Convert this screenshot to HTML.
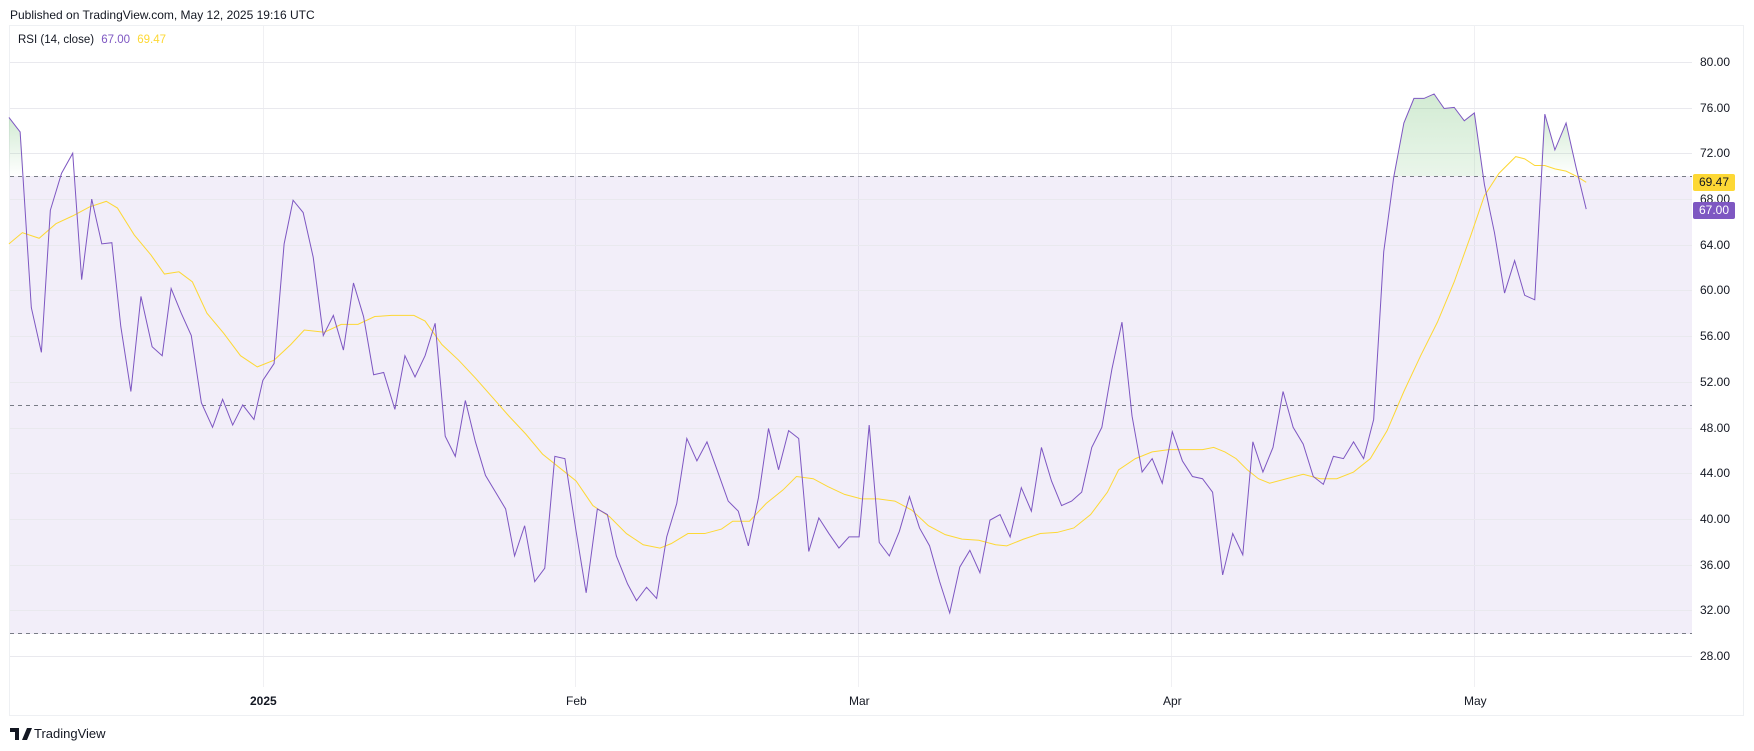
<!DOCTYPE html>
<html><head><meta charset="utf-8"><style>
body{margin:0;width:1754px;height:751px;background:#fff;position:relative;overflow:hidden;font-family:"Liberation Sans",sans-serif;color:#131722}
.t{position:absolute;font-size:12px;white-space:nowrap}
.ax{position:absolute;left:1700px;font-size:12px;color:#131722}
.bd{position:absolute;left:1693px;width:42px;height:17px;font-size:12px;line-height:17px;text-align:center;border-radius:2px}
svg{position:absolute;left:0;top:0}
</style></head><body>
<div class="t" style="left:10px;top:8px;font-size:12px">Published on TradingView.com, May 12, 2025 19:16 UTC</div>
<div style="position:absolute;left:9px;top:25px;width:1733px;height:689px;border:1px solid #eef0f3"></div>
<svg width="1754" height="751">
<g stroke="#f0f0f3" stroke-width="1">
<line x1="263.5" y1="26" x2="263.5" y2="687"/><line x1="575.5" y1="26" x2="575.5" y2="687"/><line x1="858.5" y1="26" x2="858.5" y2="687"/><line x1="1171.5" y1="26" x2="1171.5" y2="687"/><line x1="1474.5" y1="26" x2="1474.5" y2="687"/>
</g>
<rect x="10" y="176" width="1682" height="458" fill="#7e57c2" fill-opacity="0.1"/>
<g stroke="#e9e9ee" stroke-width="1">
<line x1="10" y1="62.5" x2="1692" y2="62.5"/><line x1="10" y1="108.5" x2="1692" y2="108.5"/><line x1="10" y1="153.5" x2="1692" y2="153.5"/><line x1="10" y1="199.5" x2="1692" y2="199.5"/><line x1="10" y1="245.5" x2="1692" y2="245.5"/><line x1="10" y1="290.5" x2="1692" y2="290.5"/><line x1="10" y1="336.5" x2="1692" y2="336.5"/><line x1="10" y1="382.5" x2="1692" y2="382.5"/><line x1="10" y1="428.5" x2="1692" y2="428.5"/><line x1="10" y1="473.5" x2="1692" y2="473.5"/><line x1="10" y1="519.5" x2="1692" y2="519.5"/><line x1="10" y1="565.5" x2="1692" y2="565.5"/><line x1="10" y1="610.5" x2="1692" y2="610.5"/><line x1="10" y1="656.5" x2="1692" y2="656.5"/>
</g>
<g stroke="#787b86" stroke-width="1" stroke-dasharray="4,4">
<line x1="10" y1="176.5" x2="1692" y2="176.5"/><line x1="10" y1="405.5" x2="1692" y2="405.5"/><line x1="10" y1="633.5" x2="1692" y2="633.5"/>
</g>
</svg>
<svg width="1754" height="751" viewBox="0 0 1568 671.4" preserveAspectRatio="none">
<defs>
<linearGradient id="g" x1="0" y1="0" x2="0" y2="1"><stop offset="0" stop-color="#4caf50" stop-opacity="0.25"/><stop offset="1" stop-color="#4caf50" stop-opacity="0"/></linearGradient>
<clipPath id="c"><rect x="0" y="0" width="1568" height="157.5"/></clipPath>
</defs>
<g clip-path="url(#c)">
<polygon fill="url(#g)" points="8,157.5 8,105 18,118 22,157.5"/>
<polygon fill="url(#g)" points="1228,157.5 1237,225 1246,158 1255,110 1264,88 1273,88 1282,84 1291,97 1300,96 1309,108 1318,101 1327,165 1330,157.5"/>
<polygon fill="url(#g)" points="1376,157.5 1381,102 1390,134 1400,110 1409,150 1412,157.5"/>
</g>
<polyline fill="none" stroke="#fdd835" stroke-width="0.9" points="8,218 20,208 35,213 50,200 65,193 80,185 95,180 105,186 120,210 135,228 147,245 160,243 172,252 185,280 200,298 215,318 230,328 245,322 260,308 272,295 290,297 305,290 320,290 335,283 350,282 370,282 380,287 395,308 410,322 425,338 440,355 455,372 470,388 485,406 500,418 515,430 530,452 545,462 560,477 575,487 590,490 600,486 615,477 630,477 645,473 655,466 670,466 685,450 700,438 712,426 727,428 740,435 755,442 770,446 785,446 800,448 815,456 830,470 845,478 860,482 875,483 890,487 900,488 915,482 930,477 945,476 960,472 975,460 990,440 1000,420 1015,410 1030,404 1045,402 1060,402 1075,402 1085,400 1095,404 1105,410 1115,420 1125,428 1135,432 1150,428 1165,424 1180,428 1195,428 1210,422 1225,410 1240,385 1255,350 1270,318 1285,288 1300,252 1315,210 1327,175 1340,155 1355,140 1363,142 1372,148 1381,148 1390,151 1400,153 1410,158 1418,163"/>
<polyline fill="none" stroke="#7e57c2" stroke-width="0.9" points="8,105 18,118 28,275 37,315 45,188 55,155 65,137 73,250 82,178 91,218 100,217 108,292 117,350 126,265 136,310 145,318 153,258 162,280 171,300 180,360 190,382 199,357 208,380 217,362 227,375 235,340 245,325 254,218 262,179 271,190 280,230 289,300 298,282 307,313 316,253 325,283 334,335 343,333 353,366 362,318 371,337 380,318 389,289 398,390 407,408 416,358 425,395 434,425 443,440 452,455 460,497 469,470 478,520 487,508 496,408 505,410 515,475 524,530 534,455 543,460 551,497 561,522 569,537 578,525 587,535 596,480 605,450 614,392 623,412 632,395 641,420 651,448 660,457 669,488 678,445 687,383 696,420 705,385 714,392 723,493 732,463 741,477 750,490 759,480 768,480 777,380 786,485 795,497 804,475 813,444 822,472 831,488 840,520 849,548 858,507 867,492 876,512 885,465 894,460 903,480 913,436 922,457 931,400 940,430 949,452 958,448 967,440 976,400 985,382 994,330 1003,288 1012,372 1021,422 1030,410 1039,432 1048,386 1057,412 1066,426 1075,428 1084,440 1093,514 1102,477 1111,496 1120,395 1129,422 1138,400 1147,350 1156,382 1165,397 1174,426 1183,433 1192,408 1201,410 1210,395 1219,410 1228,375 1237,225 1246,158 1255,110 1264,88 1273,88 1282,84 1291,97 1300,96 1309,108 1318,101 1327,165 1336,208 1345,262 1354,233 1363,264 1372,268 1381,102 1390,134 1400,110 1409,150 1418,187"/>
</svg>
<div class="t" style="left:18px;top:34px;font-size:11.5px">RSI (14, close) <span style="color:#7e57c2;margin-left:4px">67.00</span> <span style="color:#fdd835;margin-left:4px">69.47</span></div>
<div class="ax" style="top:55px">80.00</div>
<div class="ax" style="top:101px">76.00</div>
<div class="ax" style="top:146px">72.00</div>
<div class="ax" style="top:192px">68.00</div>
<div class="ax" style="top:238px">64.00</div>
<div class="ax" style="top:283px">60.00</div>
<div class="ax" style="top:329px">56.00</div>
<div class="ax" style="top:375px">52.00</div>
<div class="ax" style="top:421px">48.00</div>
<div class="ax" style="top:466px">44.00</div>
<div class="ax" style="top:512px">40.00</div>
<div class="ax" style="top:558px">36.00</div>
<div class="ax" style="top:603px">32.00</div>
<div class="ax" style="top:649px">28.00</div>
<div class="bd" style="top:174px;background:#fdd835;color:#131722">69.47</div>
<div class="bd" style="top:202px;background:#7e57c2;color:#fff">67.00</div>
<div class="t" style="left:250px;top:694px;font-weight:bold">2025</div>
<div class="t" style="left:566px;top:694px">Feb</div>
<div class="t" style="left:849px;top:694px">Mar</div>
<div class="t" style="left:1163px;top:694px">Apr</div>
<div class="t" style="left:1464px;top:694px">May</div>
<svg width="30" height="12" style="left:10px;top:728px" viewBox="0 0 30 12"><path d="M0 0h9v12h-4V4H0z M12 0a2 2 0 1 1 0.1 0z M17 0h5l-5 12h-5z" fill="#131722"/></svg>
<div class="t" style="left:34px;top:726px;font-size:13px">TradingView</div>
</body></html>
